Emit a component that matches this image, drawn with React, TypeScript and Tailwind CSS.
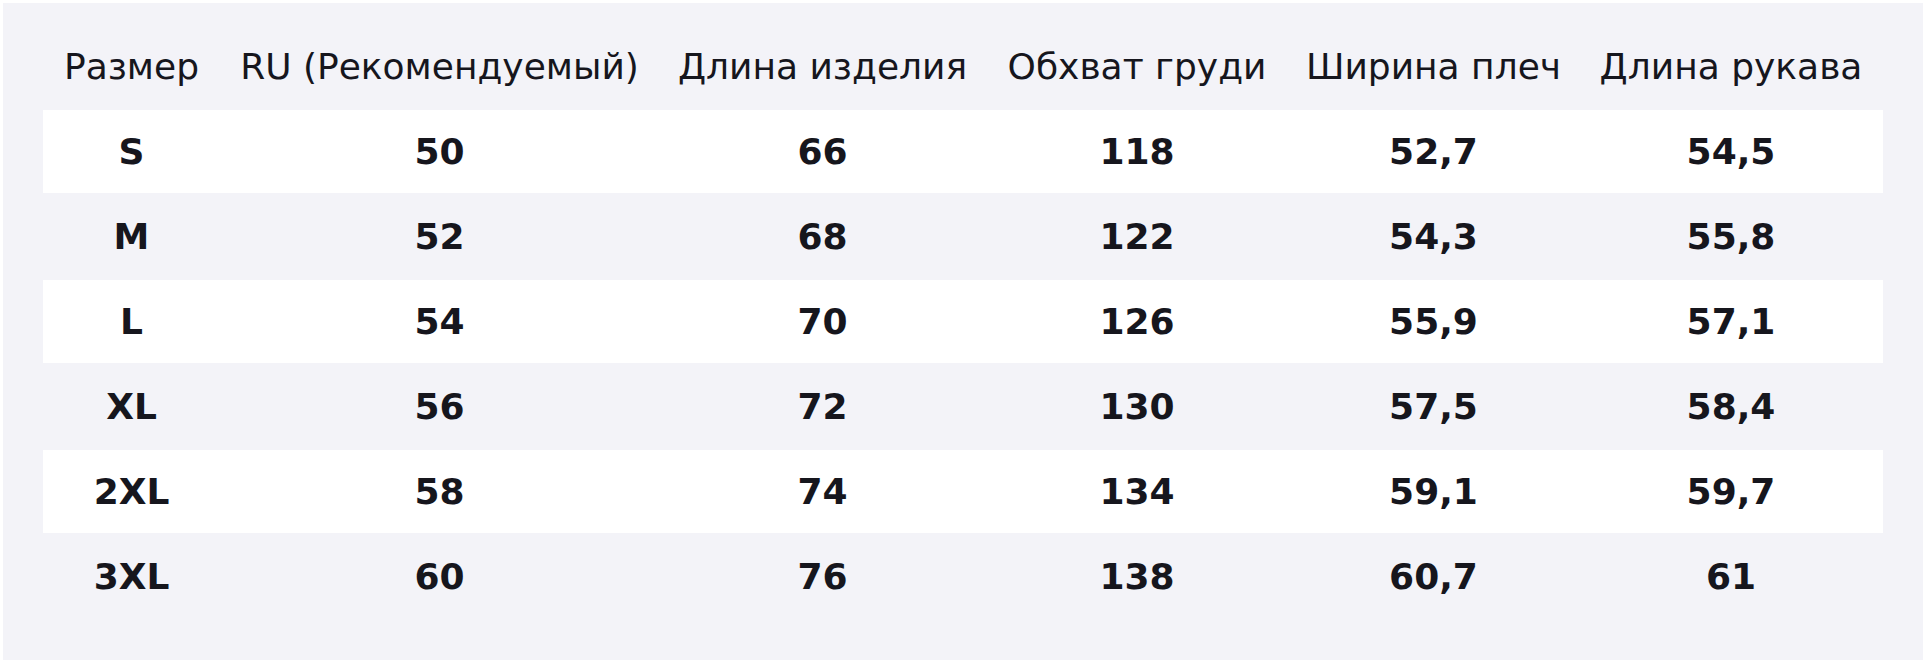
const HEADERS = ['Размер', 'RU (Рекомендуемый)', 'Длина изделия', 'Обхват груди', 'Ширина плеч', 'Длина рукава'];

const ROWS: string[][] = [
  ['S', '50', '66', '118', '52,7', '54,5'],
  ['M', '52', '68', '122', '54,3', '55,8'],
  ['L', '54', '70', '126', '55,9', '57,1'],
  ['XL', '56', '72', '130', '57,5', '58,4'],
  ['2XL', '58', '74', '134', '59,1', '59,7'],
  ['3XL', '60', '76', '138', '60,7', '61'],
];

const GRID = 'grid grid-cols-[177px_439px_327px_302px_291px_304px] items-center text-center';

export default function App() {
  return (
    <div className="bg-white p-[3px] w-[1926px] h-[663px]" style={{ fontFamily: "'DejaVu Sans', Verdana, sans-serif" }}>
      <div className="bg-[#f3f3f8] px-10 pt-10 pb-10 text-[#16161d]">
        <div className={GRID}>
          {HEADERS.map((h) => (
            <div key={h} className="pt-[3px] pb-[22px] text-[36px] leading-[42px] whitespace-nowrap">
              {h}
            </div>
          ))}
        </div>
        {ROWS.map((row, i) => (
          <div key={row[0]} className={`${GRID} ${i % 2 === 0 ? 'bg-white h-[83px]' : 'h-[87px]'}`}>
            {row.map((cell, j) => (
              <div key={j} className="text-[36px] leading-[42px] font-bold">
                {cell}
              </div>
            ))}
          </div>
        ))}
      </div>
    </div>
  );
}
